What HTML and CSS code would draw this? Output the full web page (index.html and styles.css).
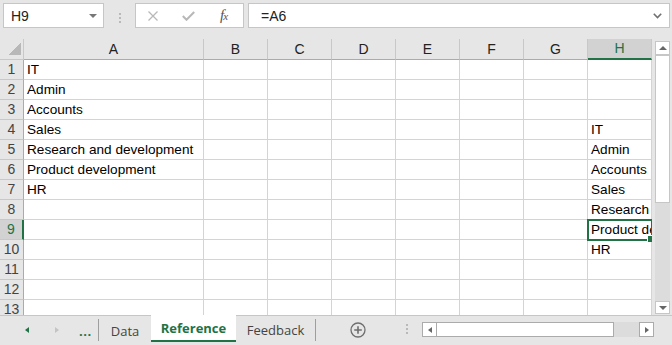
FILE: index.html
```html
<!DOCTYPE html>
<html lang="en">
<head>
    <meta charset="UTF-8">
    <title>Reference</title>
    <link rel="stylesheet" href="styles.css">
</head>
<body>
    <div class="formula-bar">
        <div class="name-box"><span>H9</span><span class="caret"></span></div>
        <div class="grip"></div>
        <div class="fx-buttons">
            <svg class="icon-cancel" width="10" height="10" viewBox="0 0 10 10"><path d="M0.5 0.5L9.5 9.5M9.5 0.5L0.5 9.5" stroke="#b8b8b8" stroke-width="1.3" fill="none"/></svg>
            <svg class="icon-enter" width="13" height="10" viewBox="0 0 13 10"><polyline points="0.8,5 4.5,8.8 12.2,1" stroke="#b8b8b8" stroke-width="2" fill="none"/></svg>
            <span class="fx">f<span class="fx-x">x</span></span>
        </div>
        <div class="formula-input">
            <span>=A6</span>
            <svg width="9" height="6" viewBox="0 0 9 6"><polyline points="0.8,0.8 4.5,4.5 8.2,0.8" stroke="#707070" stroke-width="1.6" fill="none"/></svg>
        </div>
    </div>

    <div class="sheet-area">
        <div class="grid" id="grid">
            <!-- cells are built by the script below -->
        </div>
        <div class="vscroll">
            <div class="sbtn"><span class="tri-up"></span></div>
            <div class="vtrack"><div class="vthumb"></div></div>
            <div class="sbtn sbtn-down"><span class="tri-down"></span></div>
        </div>
    </div>

    <div class="tab-bar">
        <div class="tab-nav">
            <span class="tri-left"></span>
            <span class="tri-right"></span>
            <span class="more">...</span>
        </div>
        <div class="tab tab-data">Data</div>
        <div class="tab tab-active">Reference</div>
        <div class="tab tab-feedback">Feedback</div>
        <div class="add-sheet">
            <svg width="16" height="16" viewBox="0 0 16 16">
                <circle cx="8" cy="8" r="7" stroke="#6e6e6e" stroke-width="1.3" fill="none"/>
                <path d="M8 4.2V11.8M4.2 8H11.8" stroke="#6e6e6e" stroke-width="1.6"/>
            </svg>
        </div>
        <div class="grip grip-bottom"></div>
        <div class="hscroll">
            <div class="hbtn"><span class="tri-left gray"></span></div>
            <div class="hthumb"></div>
            <div class="htrack"></div>
            <div class="hbtn hbtn-right"><span class="tri-right dark"></span></div>
        </div>
    </div>

    <script>
        const letters = ['A', 'B', 'C', 'D', 'E', 'F', 'G', 'H'];
        const colA = ['IT', 'Admin', 'Accounts', 'Sales', 'Research and development', 'Product development', 'HR'];
        const colH = ['', '', '', 'IT', 'Admin', 'Accounts', 'Sales', 'Research and development', 'Product development', 'HR'];
        const grid = document.getElementById('grid');

        function addCell(cls, text) {
            const cell = document.createElement('div');
            cell.className = cls;
            cell.textContent = text || '';
            grid.appendChild(cell);
            return cell;
        }

        // header row
        const corner = addCell('corner');
        corner.innerHTML = '<span class="corner-tri"></span>';
        letters.forEach(l => addCell(l === 'H' ? 'col-head active-col' : 'col-head', l));

        // rows 1..13
        for (let r = 1; r <= 13; r++) {
            addCell(r === 9 ? 'row-head active-row' : 'row-head', r);
            letters.forEach(l => {
                let text = '';
                if (l === 'A') text = colA[r - 1];
                if (l === 'H') text = colH[r - 1];
                addCell(l === 'H' && r === 9 ? 'cell selected' : 'cell', text);
            });
        }
    </script>
</body>
</html>
```

FILE: styles.css
```css
* {
    box-sizing: border-box;
}

body {
    margin: 0;
    width: 672px;
    height: 345px;
    overflow: hidden;
    background: #e6e6e6;
    font-family: "Liberation Sans", Arial, sans-serif;
    color: #000;
}

/* formula bar */
.formula-bar {
    display: flex;
    align-items: flex-start;
    height: 39px;
    padding: 3px 0 0 3px;
}

.name-box {
    width: 101px;
    height: 25px;
    background: #fff;
    border: 1px solid #c6c6c6;
    display: flex;
    align-items: center;
    justify-content: space-between;
    padding: 0 6px 0 7px;
    font-size: 14px;
    color: #222;
}

.caret {
    width: 0;
    height: 0;
    border-left: 4px solid transparent;
    border-right: 4px solid transparent;
    border-top: 4px solid #777;
}

.grip {
    width: 2px;
    height: 10px;
    margin: 10px 0 0 15px;
    background-image: linear-gradient(#b9b9b9 2px, transparent 2px);
    background-size: 2px 4px;
}

.fx-buttons {
    width: 109px;
    height: 25px;
    margin-left: 14px;
    background: #fff;
    border: 1px solid #c6c6c6;
    display: flex;
    align-items: center;
}

.icon-cancel {
    margin-left: 12px;
}

.icon-enter {
    margin-left: 24px;
}

.fx {
    margin-left: 25px;
    font-family: "Liberation Serif", serif;
    font-style: italic;
    font-size: 15px;
    color: #555;
    letter-spacing: -1px;
}

.fx-x {
    font-size: 11px;
}

.formula-input {
    width: 422px;
    height: 25px;
    margin-left: 4px;
    background: #fff;
    border: 1px solid #c6c6c6;
    display: flex;
    align-items: center;
    justify-content: space-between;
    padding: 0 7px 0 12px;
    font-size: 14px;
    color: #222;
}

/* sheet */
.sheet-area {
    display: flex;
    height: 276px;
}

.grid {
    width: 652px;
    height: 276px;
    overflow: hidden;
    display: grid;
    grid-template-columns: 24px 180px repeat(7, 64px);
    grid-template-rows: 21px repeat(13, 20px);
    font-size: 13.6px;
}

.corner,
.col-head,
.row-head {
    background: #e6e6e6;
    border-right: 1px solid #c8c8c8;
    border-bottom: 1px solid #c8c8c8;
    text-align: center;
    font-size: 14px;
}

.corner {
    display: flex;
    align-items: flex-end;
    justify-content: flex-end;
    padding: 0 2px 4px 0;
}

.corner-tri {
    width: 12px;
    height: 12px;
    background: linear-gradient(to bottom right, transparent 50%, #b8b8b8 50%);
}

.col-head {
    line-height: 20px;
    color: #222;
    border-bottom-color: #ababab;
}

.row-head {
    line-height: 19px;
    color: #444;
    border-right-color: #ababab;
}

.active-col {
    background: #d2d2d2;
    color: #217346;
    border-bottom: 2px solid #217346;
    line-height: 19px;
}

.active-row {
    background: #d2d2d2;
    color: #217346;
    border-right: 2px solid #217346;
}

.cell {
    background: #fff;
    border-right: 1px solid #d4d4d4;
    border-bottom: 1px solid #d4d4d4;
    padding: 0 3px;
    line-height: 19px;
    white-space: nowrap;
    overflow: hidden;
}

.selected {
    position: relative;
    overflow: visible;
    outline: 2px solid #217346;
    outline-offset: -1px;
    clip-path: inset(-2px -2px -2px -2px);
}

.selected::after {
    content: "";
    position: absolute;
    right: -4px;
    bottom: -4px;
    width: 6px;
    height: 6px;
    background: #217346;
    border: 1px solid #fff;
}

/* vertical scrollbar */
.vscroll {
    width: 20px;
    display: flex;
    flex-direction: column;
    padding: 2px 2px 1px 3px;
    background: #e6e6e6;
}

.sbtn {
    height: 14px;
    background: #fff;
    border: 1px solid #c6c6c6;
    display: flex;
    align-items: center;
    justify-content: center;
}

.sbtn-down {
    height: 13px;
}

.vtrack {
    flex: 1;
    background: #dcdcdc;
}

.vthumb {
    height: 148px;
    background: #fff;
    border: 1px solid #c6c6c6;
}

.tri-up {
    border-left: 4px solid transparent;
    border-right: 4px solid transparent;
    border-bottom: 4px solid #666;
}

.tri-down {
    border-left: 4px solid transparent;
    border-right: 4px solid transparent;
    border-top: 4px solid #666;
}

/* sheet tabs */
.tab-bar {
    display: flex;
    height: 30px;
    border-top: 1px solid #c6c6c6;
    font-family: "Open Sans", "Noto Sans", sans-serif;
    font-size: 13px;
}

.tab-nav {
    width: 99px;
    display: flex;
    align-items: center;
    border-right: 1px solid #9e9e9e;
    margin: 3px 0 4px;
    padding-left: 25px;
}

.tri-left {
    border-top: 3.5px solid transparent;
    border-bottom: 3.5px solid transparent;
    border-right: 4px solid #217346;
}

.tri-right {
    margin-left: 26px;
    border-top: 3.5px solid transparent;
    border-bottom: 3.5px solid transparent;
    border-left: 4px solid #c4c4c4;
}

.more {
    margin-left: 20px;
    color: #217346;
    font-weight: bold;
    letter-spacing: 0.5px;
    padding-top: 2px;
}

.tab {
    display: flex;
    align-items: center;
    justify-content: center;
    color: #444;
}

.tab-data {
    width: 52px;
}

.tab-active {
    width: 85px;
    margin-top: -1px;
    height: 27px;
    background: #fff;
    color: #217346;
    font-weight: bold;
    border-bottom: 2px solid #217346;
}

.tab-feedback {
    width: 80px;
    border-right: 1px solid #9e9e9e;
    margin: 3px 0 4px;
}

.add-sheet {
    margin-left: 34px;
    display: flex;
    align-items: center;
    padding-bottom: 2px;
}

.grip-bottom {
    margin: 8px 0 0 40px;
}

.hscroll {
    width: 232px;
    height: 15px;
    margin: 6px 0 0 14px;
    display: flex;
    background: #dcdcdc;
}

.hbtn {
    width: 15px;
    background: #fff;
    border: 1px solid #ababab;
    display: flex;
    align-items: center;
    justify-content: center;
}

.hthumb {
    width: 177px;
    background: #fff;
    border: 1px solid #ababab;
    border-left: none;
}

.htrack {
    flex: 1;
}

.tri-left.gray {
    border-right-color: #666;
}

.tri-right.dark {
    margin-left: 0;
    border-left-color: #666;
}
```
